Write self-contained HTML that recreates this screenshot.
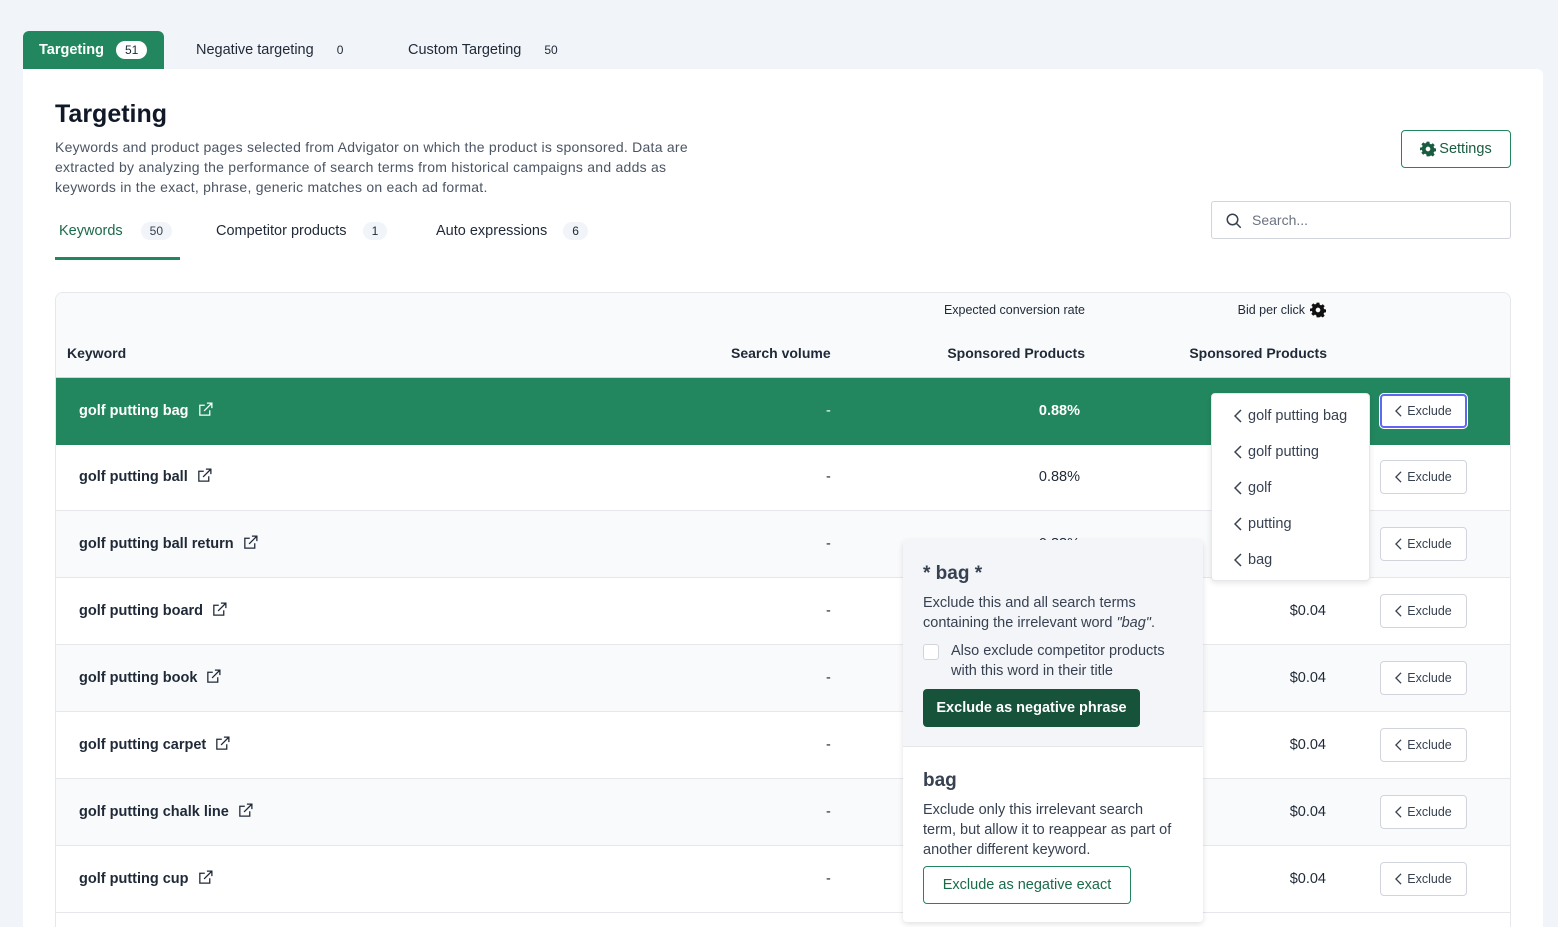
<!DOCTYPE html><html><head><style>
*{box-sizing:border-box;margin:0;padding:0}
html,body{width:1558px;height:927px;overflow:hidden}
body{background:#f1f4f8;font-family:"Liberation Sans",sans-serif;color:#1f2937;position:relative}
.abs{position:absolute}
.tab{position:absolute;top:31px;height:38px;font-size:14.5px;display:flex;align-items:center}
.badge{display:inline-block;border-radius:10px;font-size:12px;padding:2px 9px;margin-left:12px}
.card{position:absolute;left:23px;top:69px;width:1520px;height:858px;background:#fff;border-radius:0 6px 0 0}
.table{position:absolute;left:55px;top:292px;width:1456px;height:635px;border:1px solid #e5e7eb;border-bottom:none;border-radius:8px 8px 0 0;overflow:hidden;background:#fff}
.hdr{position:absolute;left:0;top:0;width:100%;height:85px;background:#f9fafb;border-bottom:1px solid #d1d5db;font-size:14px;font-weight:bold}
.row{position:absolute;left:0;width:100%;height:67px;border-bottom:1px solid #e5e7eb;font-size:14.5px}
.row>.c{position:absolute;top:0;line-height:66px}
.kw{left:23px;font-weight:bold}
.kw svg{vertical-align:-3px;margin-left:8px}
.sv{left:770px}
.cr{right:430px}
.bid{right:184px}
.exc{position:absolute;left:1324px;top:16px;width:87px;height:34px;border:1px solid #d1d5db;border-radius:4px;background:#fff;font-size:12.5px;color:#374151;display:flex;align-items:center;justify-content:center;gap:5px}
.dd div{display:flex;align-items:center;gap:6px}
</style></head><body>
<svg width="0" height="0" style="position:absolute"><defs>
<symbol id="ch" viewBox="0 0 8 14"><path d="M7 1L1 7l6 6" fill="none" stroke="#374151" stroke-width="1.5"/></symbol>
<symbol id="ext" viewBox="0 0 24 24"><path d="M18 13v7H4V6h7M14 3h7v7M21 3L10 14" fill="none" stroke="currentColor" stroke-width="1.8"/></symbol>
</defs></svg>
<div class="tab" style="left:23px;width:141px;background:#22875e;color:#fff;border-radius:6px 6px 0 0;padding-left:16px;font-weight:bold">Targeting<span class="badge" style="background:#fff;color:#1f2937;font-weight:normal">51</span></div>
<div class="tab" style="left:196px">Negative targeting<span class="badge" style="margin-left:14px">0</span></div>
<div class="tab" style="left:408px">Custom Targeting<span class="badge" style="margin-left:14px">50</span></div>
<div class="card"></div>
<div class="abs" style="left:55px;top:100px;font-size:25px;font-weight:bold;color:#111827">Targeting</div>
<div class="abs" style="left:55px;top:137px;width:665px;font-size:14px;line-height:20px;color:#4b5563;letter-spacing:.25px">Keywords and product pages selected from Advigator on which the product is sponsored. Data are extracted by analyzing the performance of search terms from historical campaigns and adds as keywords in the exact, phrase, generic matches on each ad format.</div>
<div class="abs" style="left:1401px;top:130px;width:110px;height:38px;border:1px solid #22875e;border-radius:4px;color:#1a5c40;font-size:14.5px;display:flex;align-items:center;justify-content:center;gap:3px">
<svg width="16" height="16" viewBox="0 0 24 24"><path fill="#1a5c40" d="M12 8.5a3.5 3.5 0 100 7 3.5 3.5 0 000-7zM10 1h4l.6 3 2 1 2.6-1.7 2.8 2.8-1.7 2.6 1 2 3 .6v4l-3 .6-1 2 1.7 2.6-2.8 2.8-2.6-1.7-2 1L14 23h-4l-.6-3-2-1-2.6 1.7-2.8-2.8 1.7-2.6-1-2L0 14v-4l3-.6 1-2L2.1 4.8 4.9 2l2.6 1.7 2-1z" fill-rule="evenodd"/></svg>Settings</div>
<div class="abs" style="left:1211px;top:201px;width:300px;height:38px;border:1px solid #d1d5db;border-radius:3px;font-size:14px;color:#6b7280;padding-left:40px;line-height:36px">Search...
<svg class="abs" style="left:13px;top:10px" width="18" height="18" viewBox="0 0 24 24" fill="none" stroke="#374151" stroke-width="2"><circle cx="10" cy="10" r="7"/><path d="M15 15l6 6"/></svg></div>
<div class="abs" style="left:59px;top:222px;font-size:14.5px;color:#1a6b4a">Keywords<span class="badge" style="background:#f1f4f8;color:#374151;margin-left:18px">50</span></div>
<div class="abs" style="left:55px;top:257px;width:125px;height:3px;background:#22875e"></div>
<div class="abs" style="left:216px;top:222px;font-size:14.5px">Competitor products<span class="badge" style="background:#f1f4f8;margin-left:16px">1</span></div>
<div class="abs" style="left:436px;top:222px;font-size:14.5px">Auto expressions<span class="badge" style="background:#f1f4f8;margin-left:16px">6</span></div>
<div class="table">
<div class="hdr">
<div class="abs" style="left:11px;top:52px">Keyword</div>
<div class="abs" style="left:675px;top:52px">Search volume</div>
<div class="abs" style="right:425px;top:52px">Sponsored Products</div>
<div class="abs" style="right:183px;top:52px">Sponsored Products</div>
<div class="abs" style="right:425px;top:10px;font-size:12.5px;font-weight:normal">Expected conversion rate</div>
<div class="abs" style="right:184px;top:9px;font-size:12.5px;font-weight:normal;display:flex;align-items:center;gap:5px">Bid per click <svg width="16" height="16" viewBox="0 0 24 24"><path fill="#111" d="M12 8.5a3.5 3.5 0 100 7 3.5 3.5 0 000-7zM10 1h4l.6 3 2 1 2.6-1.7 2.8 2.8-1.7 2.6 1 2 3 .6v4l-3 .6-1 2 1.7 2.6-2.8 2.8-2.6-1.7-2 1L14 23h-4l-.6-3-2-1-2.6 1.7-2.8-2.8 1.7-2.6-1-2L0 14v-4l3-.6 1-2L2.1 4.8 4.9 2l2.6 1.7 2-1z" fill-rule="evenodd"/></svg></div>
</div>
<div class="row" style="top:85px;background:#22875e;color:#fff;border:none"><div class="c kw">golf putting bag<svg width="17" height="17"><use href="#ext"/></svg></div><div class="c sv">-</div><div class="c cr" style="font-weight:bold">0.88%</div><div class="exc" style="border:2px solid #6366f1;box-shadow:0 0 0 1px #fff"><svg width="7" height="12"><use href="#ch"/></svg>Exclude</div></div>
<div class="row" style="top:151px"><div class="c kw">golf putting ball<svg width="17" height="17"><use href="#ext"/></svg></div><div class="c sv">-</div><div class="c cr">0.88%</div><div class="exc"><svg width="7" height="12"><use href="#ch"/></svg>Exclude</div></div>
<div class="row" style="top:218px;background:#f9fafb"><div class="c kw">golf putting ball return<svg width="17" height="17"><use href="#ext"/></svg></div><div class="c sv">-</div><div class="c cr">0.88%</div><div class="exc"><svg width="7" height="12"><use href="#ch"/></svg>Exclude</div></div>
<div class="row" style="top:285px"><div class="c kw">golf putting board<svg width="17" height="17"><use href="#ext"/></svg></div><div class="c sv">-</div><div class="c bid">$0.04</div><div class="exc"><svg width="7" height="12"><use href="#ch"/></svg>Exclude</div></div>
<div class="row" style="top:352px;background:#f9fafb"><div class="c kw">golf putting book<svg width="17" height="17"><use href="#ext"/></svg></div><div class="c sv">-</div><div class="c bid">$0.04</div><div class="exc"><svg width="7" height="12"><use href="#ch"/></svg>Exclude</div></div>
<div class="row" style="top:419px"><div class="c kw">golf putting carpet<svg width="17" height="17"><use href="#ext"/></svg></div><div class="c sv">-</div><div class="c bid">$0.04</div><div class="exc"><svg width="7" height="12"><use href="#ch"/></svg>Exclude</div></div>
<div class="row" style="top:486px;background:#f9fafb"><div class="c kw">golf putting chalk line<svg width="17" height="17"><use href="#ext"/></svg></div><div class="c sv">-</div><div class="c bid">$0.04</div><div class="exc"><svg width="7" height="12"><use href="#ch"/></svg>Exclude</div></div>
<div class="row" style="top:553px"><div class="c kw">golf putting cup<svg width="17" height="17"><use href="#ext"/></svg></div><div class="c sv">-</div><div class="c bid">$0.04</div><div class="exc"><svg width="7" height="12"><use href="#ch"/></svg>Exclude</div></div>
</div>
<div class="abs dd" style="left:1211px;top:393px;width:159px;height:188px;background:#fff;border:1px solid #e5e7eb;border-radius:4px;box-shadow:0 2px 6px rgba(0,0,0,.1);font-size:14.5px;color:#374151;padding:4px 0 0 22px;line-height:36px">
<div><svg width="8" height="14"><use href="#ch"/></svg>golf putting bag</div><div><svg width="8" height="14"><use href="#ch"/></svg>golf putting</div><div><svg width="8" height="14"><use href="#ch"/></svg>golf</div><div><svg width="8" height="14"><use href="#ch"/></svg>putting</div><div><svg width="8" height="14"><use href="#ch"/></svg>bag</div></div>
<div class="abs" style="left:903px;top:540px;width:300px;height:382px;background:#fff;border-radius:4px;box-shadow:0 2px 6px rgba(0,0,0,.12);overflow:hidden;color:#374151">
<div style="background:#f3f5f8;height:207px;padding:23px 20px 0 20px;border-bottom:1px solid #e5e7eb">
<div style="font-size:19px;font-weight:bold">* bag *</div>
<div style="font-size:14.5px;line-height:20px;margin-top:8px">Exclude this and all search terms containing the irrelevant word <i>"bag"</i>.</div>
<div style="font-size:14.5px;line-height:20px;margin-top:8px;padding-left:28px;position:relative"><span class="abs" style="left:0;top:3px;width:16px;height:16px;border:1px solid #d1d5db;border-radius:3px;background:#fff"></span>Also exclude competitor products with this word in their title</div>
<div style="margin-top:8px;width:217px;height:38px;background:#17533a;color:#fff;border-radius:4px;font-size:14.5px;font-weight:bold;text-align:center;line-height:38px">Exclude as negative phrase</div></div>
<div style="padding:23px 20px 0 20px">
<div style="font-size:19px;font-weight:bold">bag</div>
<div style="font-size:14.5px;line-height:20px;margin-top:8px;width:250px">Exclude only this irrelevant search term, but allow it to reappear as part of another different keyword.</div>
<div style="margin-top:6px;width:208px;height:38px;border:1px solid #22875e;color:#1a6b4a;border-radius:4px;font-size:14.5px;text-align:center;line-height:36px">Exclude as negative exact</div></div>
</div>
</body></html>
